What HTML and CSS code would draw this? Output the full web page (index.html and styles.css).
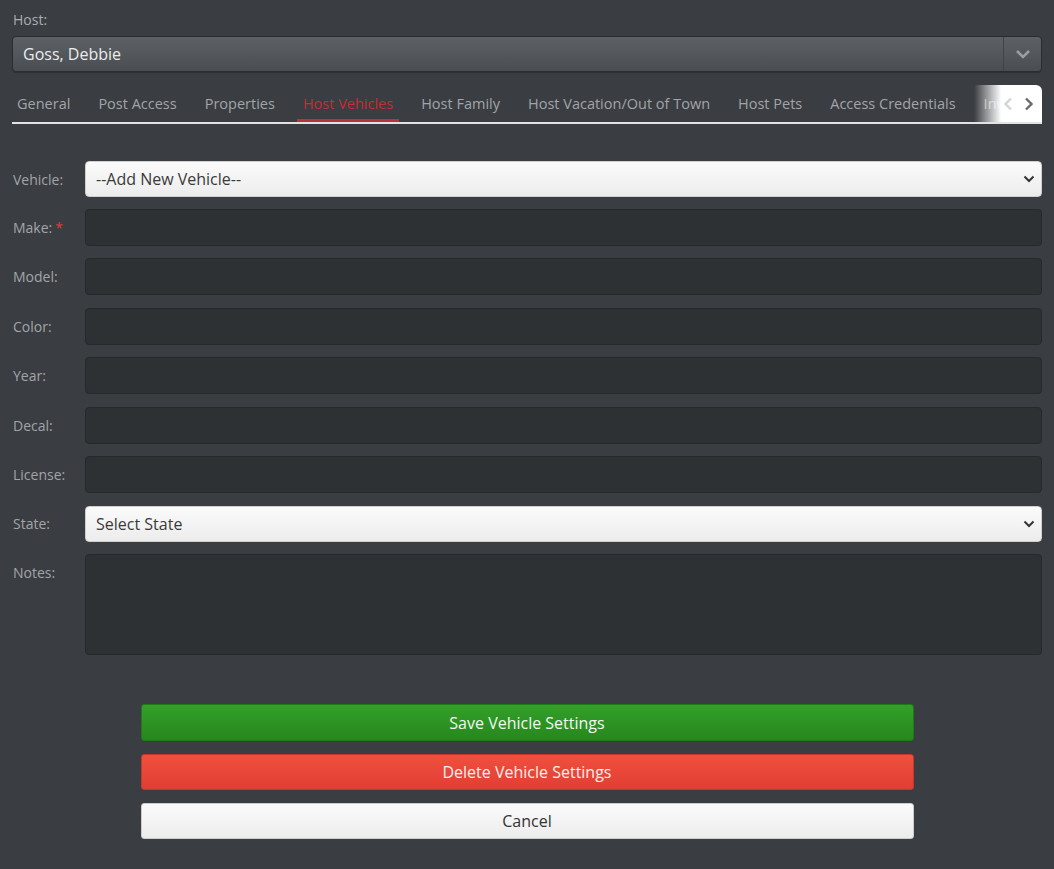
FILE: index.html
```html
<!DOCTYPE html>
<html>
<head>
<meta charset="utf-8">
<link rel="stylesheet" href="styles.css">
</head>
<body>
<div class="page">
  <div class="host-label">Host:</div>
  <div class="host-select">
    <span class="host-value">Goss, Debbie</span>
    <span class="host-arrow">
      <svg width="16" height="10" viewBox="0 0 16 10"><path d="M2 2 L8 8 L14 2" fill="none" stroke="#9a9ea2" stroke-width="2.6"/></svg>
    </span>
  </div>
  <div class="tabs">
    <div class="tab-list">
      <span class="tab">General</span>
      <span class="tab">Post Access</span>
      <span class="tab">Properties</span>
      <span class="tab active">Host Vehicles</span>
      <span class="tab">Host Family</span>
      <span class="tab">Host Vacation/Out of Town</span>
      <span class="tab">Host Pets</span>
      <span class="tab">Access Credentials</span>
      <span class="tab">Invitations</span>
    </div>
    <div class="tab-nav">
      <svg width="10" height="14" viewBox="0 0 10 14"><path d="M8 1.5 L2.5 7 L8 12.5" fill="none" stroke="#d4d4d4" stroke-width="2.4"/></svg>
      <svg width="10" height="14" viewBox="0 0 10 14"><path d="M2 1.5 L7.5 7 L2 12.5" fill="none" stroke="#6a6a6a" stroke-width="2.4"/></svg>
    </div>
  </div>

  <form class="form">
    <div class="row">
      <label class="lbl">Vehicle:</label>
      <div class="select light"><span>--Add New Vehicle--</span>
        <svg class="caret" width="12" height="8" viewBox="0 0 12 8"><path d="M1.5 1.5 L6 6 L10.5 1.5" fill="none" stroke="#333" stroke-width="2"/></svg>
      </div>
    </div>
    <div class="row">
      <label class="lbl">Make:<span class="req">*</span></label>
      <div class="input"></div>
    </div>
    <div class="row">
      <label class="lbl">Model:</label>
      <div class="input"></div>
    </div>
    <div class="row">
      <label class="lbl">Color:</label>
      <div class="input"></div>
    </div>
    <div class="row">
      <label class="lbl">Year:</label>
      <div class="input"></div>
    </div>
    <div class="row">
      <label class="lbl">Decal:</label>
      <div class="input"></div>
    </div>
    <div class="row">
      <label class="lbl">License:</label>
      <div class="input"></div>
    </div>
    <div class="row">
      <label class="lbl">State:</label>
      <div class="select light"><span>Select State</span>
        <svg class="caret" width="12" height="8" viewBox="0 0 12 8"><path d="M1.5 1.5 L6 6 L10.5 1.5" fill="none" stroke="#333" stroke-width="2"/></svg>
      </div>
    </div>
    <div class="row notes-row">
      <label class="lbl">Notes:</label>
      <div class="input textarea"></div>
    </div>
  </form>

  <div class="buttons">
    <div class="btn save">Save Vehicle Settings</div>
    <div class="btn delete">Delete Vehicle Settings</div>
    <div class="btn cancel">Cancel</div>
  </div>
</div>
</body>
</html>
```

FILE: styles.css
```css
* { box-sizing: border-box; }
html, body {
  margin: 0;
  padding: 0;
  background: #3a3d41;
  font-family: "Open Sans", "Liberation Sans", sans-serif;
}
.page {
  padding: 10px 12px 0 12px;
  width: 1054px;
}
.host-label {
  color: #a9adb1;
  font-size: 14px;
  line-height: 20px;
  padding-left: 1px;
  margin-bottom: 6px;
}
.host-select {
  height: 36px;
  border: 1px solid #2a2d30;
  border-radius: 4px;
  background: linear-gradient(#5d6165, #4a4e52);
  display: flex;
  align-items: center;
  box-shadow: 0 1px 0 rgba(0,0,0,0.2);
}
.host-value {
  flex: 1;
  color: #ececec;
  font-size: 16px;
  padding-left: 10px;
}
.host-arrow {
  width: 38px;
  height: 100%;
  border-left: 1px solid #404448;
  display: flex;
  align-items: center;
  justify-content: center;
}
.tabs {
  margin-top: 13px;
  height: 39px;
  position: relative;
  border-bottom: 2px solid #e2e2e2;
  overflow: hidden;
}
.tab-list {
  display: flex;
  gap: 16px;
  white-space: nowrap;
  height: 100%;
}
.tab {
  color: #a1a5a9;
  font-size: 14.5px;
  padding: 9px 6px 0 6px;
  height: 100%;
}
.tab:first-child {
  padding-left: 5px;
}
.tab.active {
  color: #c22e37;
  border-bottom: 3px solid #b7323a;
}
.tab-nav {
  position: absolute;
  right: 0;
  top: 0;
  height: 37px;
  width: 68px;
  border-radius: 0 6px 0 0;
  background: linear-gradient(to right, rgba(255,255,255,0) 0%, #fff 40%, #fff 100%);
  display: flex;
  align-items: center;
  justify-content: flex-end;
  gap: 11px;
  padding-right: 8px;
}
.form {
  margin-top: 37px;
  display: flex;
  flex-direction: column;
  gap: 12.5px;
}
.form .row:first-child {
  margin-bottom: -1px;
}
.row {
  display: flex;
  align-items: center;
}
.lbl {
  width: 73px;
  flex: none;
  color: #a1a5a9;
  font-size: 14px;
  padding-left: 1px;
}
.req {
  color: #d9403b;
  margin-left: 3px;
}
.select {
  flex: 1;
  height: 36px;
  border-radius: 4px;
  display: flex;
  align-items: center;
  justify-content: space-between;
  padding: 0 6px 0 10px;
  font-size: 16px;
}
.select.light {
  background: linear-gradient(#fbfbfb, #ececec);
  border: 1px solid #cfcfcf;
  color: #3a3a3a;
}
.input {
  flex: 1;
  height: 37px;
  background: #2e3134;
  border: 1px solid #26292c;
  border-radius: 4px;
}
.notes-row {
  align-items: flex-start;
}
.notes-row .lbl {
  padding-top: 9px;
}
.textarea {
  height: 101px;
}
.buttons {
  width: 773px;
  margin: 49px auto 0 auto;
  display: flex;
  flex-direction: column;
  gap: 13px;
}
.btn {
  height: 37px;
  border-radius: 3px;
  display: flex;
  align-items: center;
  justify-content: center;
  font-size: 16px;
}
.save {
  background: linear-gradient(#33a028, #27871e);
  border: 1px solid #207a1a;
  color: #f2f8f0;
}
.delete {
  background: linear-gradient(#f0503f, #df3e32);
  border: 1px solid #c8352b;
  color: #fdf0ee;
  height: 36px;
}
.cancel {
  background: linear-gradient(#fbfbfb, #ececec);
  border: 1px solid #cccccc;
  color: #333;
  height: 36px;
}
```
